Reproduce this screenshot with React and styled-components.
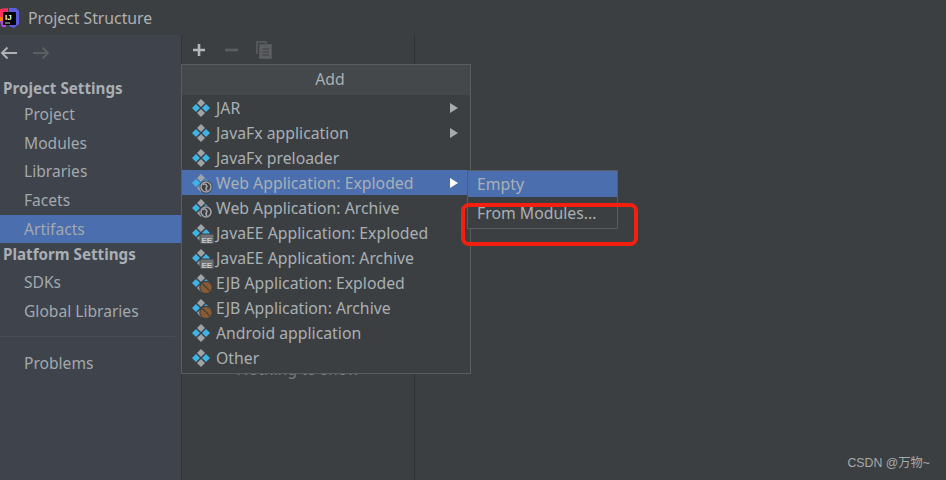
import React from "react";
import styled, { createGlobalStyle } from "styled-components";

const GlobalStyle = createGlobalStyle`
  html, body {
    margin: 0;
    padding: 0;
    background: #3c3f41;
  }
  body {
    font-family: "Noto Sans", "Open Sans", sans-serif;
    color: #a9b0b5;
  }
`;

const Frame = styled.div`
  position: relative;
  width: 946px;
  height: 480px;
  overflow: hidden;
  background: #3c3f41;
  display: flex;
  flex-direction: column;
`;

const TitleBar = styled.div`
  height: 35px;
  flex: none;
  display: flex;
  align-items: center;
  gap: 8px;
  padding-top: 1px;
  box-sizing: border-box;
  font-size: 15.75px;
  color: #afb1b3;
`;

const Body = styled.div`
  flex: 1;
  display: flex;
  min-height: 0;
`;

const Sidebar = styled.div`
  width: 181px;
  flex: none;
  background: #3e434c;
  border-right: 1px solid #323232;
`;

const NavArrows = styled.div`
  height: 35px;
  display: flex;
  align-items: center;
  gap: 14px;
  padding-top: 1px;
  box-sizing: border-box;
`;

const SideHead = styled.div`
  height: ${(p) => p.$height}px;
  line-height: ${(p) => p.$line}px;
  padding-left: 3px;
  font-size: 15.2px;
  font-weight: 700;
  color: #a9afb3;
  margin-top: ${(p) => p.$top || 0}px;
`;

const SideItem = styled.div`
  height: 28.7px;
  line-height: 28.7px;
  padding-left: 24px;
  font-size: 15.6px;
  color: #a3a9ad;
  background: ${(p) => (p.$active ? "#4b6eaf" : "transparent")};
`;

const SideRule = styled.div`
  height: 1px;
  margin: 11px 6px 12px 0;
  background: #4a4c4f;
`;

const Middle = styled.div`
  width: 232px;
  flex: none;
  position: relative;
  border-right: 1px solid #323232;
`;

const Tools = styled.div`
  height: 29px;
  display: flex;
  align-items: center;
  gap: 18px;
  padding-left: 10px;
`;

const Empty = styled.div`
  position: absolute;
  top: 323px;
  left: 0;
  width: 232px;
  text-align: center;
  font-size: 15.8px;
  color: #7a7d7f;
`;

const Popup = styled.div`
  position: absolute;
  left: 181px;
  top: 64px;
  width: 288px;
  height: 308px;
  background: #3c3f41;
  border: 1px solid #5a5d5f;
`;

const PopupTitle = styled.div`
  height: 30px;
  line-height: 29px;
  padding-left: 8px;
  text-align: center;
  font-size: 15.8px;
  background: #45484b;
  color: #a9afb3;
`;

const MenuRow = styled.div`
  height: 25px;
  display: flex;
  align-items: center;
  gap: 6px;
  padding: 0 12px 0 10px;
  font-size: 15.8px;
  color: #a9b0b5;
  background: ${(p) => (p.$active ? "#4b6eaf" : "transparent")};
`;

const RowLabel = styled.span`
  flex: 1;
  white-space: nowrap;
`;

const Caret = styled.span`
  width: 0;
  height: 0;
  border-left: 8px solid ${(p) => (p.$active ? "#ffffff" : "#a9acae")};
  border-top: 5px solid transparent;
  border-bottom: 5px solid transparent;
`;

const SubMenu = styled.div`
  position: absolute;
  left: 467px;
  top: 170px;
  width: 149px;
  height: 57px;
  background: #3c3f41;
  border: 1px solid #5a5d5f;
`;

const SubRow = styled.div`
  height: ${(p) => (p.$active ? 26 : 30)}px;
  line-height: ${(p) => (p.$active ? 26 : 30)}px;
  padding-left: 9px;
  margin-bottom: ${(p) => (p.$active ? 1 : 0)}px;
  font-size: 15.8px;
  color: #a9b0b5;
  background: ${(p) => (p.$active ? "#4b6eaf" : "transparent")};
`;

const RedMark = styled.div`
  position: absolute;
  left: 461px;
  top: 203px;
  width: 169px;
  height: 35px;
  border: 4px solid #f4200f;
  border-radius: 8px;
`;

const Watermark = styled.div`
  position: absolute;
  right: 16px;
  bottom: 9px;
  font-family: "Liberation Sans", "Noto Sans CJK SC", sans-serif;
  font-size: 12.3px;
  color: #a8aaac;
`;

const Logo = () => (
  <svg width="20" height="20" viewBox="0 0 20 20">
    <path d="M0 1 L8 0 L8 14 L0 14 Z" fill="#fe315d" />
    <path d="M9 0 L16 0 L19 3 L19 16 L14 20 L9 18 Z" fill="#5c5ce0" />
    <path d="M0 13 L6 13 L6 19 L2 19 Z" fill="#b345f1" />
    <path d="M0 9 L3 9 L3 13 L0 13 Z" fill="#f97a12" />
    <rect x="3" y="4" width="13" height="13" fill="#000" />
    <text x="5" y="11.5" fontSize="8" fontWeight="700" fill="#fff" fontFamily="Liberation Sans">IJ</text>
    <rect x="5" y="14.5" width="5" height="1" fill="#d8d8d8" />
  </svg>
);

const ArrowLeft = () => (
  <svg width="18" height="14" viewBox="0 0 18 14" fill="none" stroke="#aeb0b2" strokeWidth="2">
    <path d="M17 7 H2 M7.5 1.5 L2 7 L7.5 12.5" />
  </svg>
);

const ArrowRight = () => (
  <svg width="18" height="14" viewBox="0 0 18 14" fill="none" stroke="#5c5f61" strokeWidth="2">
    <path d="M1 7 H16 M10.5 1.5 L16 7 L10.5 12.5" />
  </svg>
);

const Plus = () => (
  <svg width="14" height="14" viewBox="0 0 14 14" stroke="#b4b6b8" strokeWidth="2.6">
    <path d="M7 1 V13 M1 7 H13" />
  </svg>
);

const Minus = () => (
  <svg width="14" height="14" viewBox="0 0 14 14" stroke="#5c5f61" strokeWidth="2.6">
    <path d="M1 7 H14" />
  </svg>
);

const Copy = () => (
  <svg width="16" height="18" viewBox="0 0 16 18" fill="none" stroke="#5c5f61" strokeWidth="1.5">
    <path d="M1 13 V1 H10 V3" />
    <path d="M4 4 H15 V17 H4 Z" fill="#5c5f61" />
    <path d="M6.5 8 H13 M6.5 11 H13 M6.5 14 H13" stroke="#3c3f41" strokeWidth="1" />
  </svg>
);

// module icon: four separate diamonds, with an optional badge at bottom right
const ModuleIcon = ({ badge }) => (
  <svg width="18" height="18" viewBox="0 0 18 18" style={{ flex: "none", overflow: "visible" }}>
    <path d="M9 0 L13 4 L9 8 L5 4 Z" fill="#a0a4a8" />
    <path d="M4 5 L8 9 L4 13 L0 9 Z" fill="#3eb4e6" />
    <path d="M14 5 L18 9 L14 13 L10 9 Z" fill="#3eb4e6" />
    <path d="M9 10 L13 14 L9 18 L5 14 Z" fill="#a0a4a8" />
    {badge === "web" && (
      <g>
        <circle cx="14" cy="13" r="6.5" fill="#3c3f41" />
        <circle cx="14" cy="13" r="5" fill="none" stroke="#a0a4a8" strokeWidth="1.6" />
        <path d="M10.5 10.5 Q14 9 15 12.5 Q13 14.5 15 17" fill="none" stroke="#a0a4a8" strokeWidth="1.6" />
      </g>
    )}
    {badge === "ee" && (
      <g>
        <rect x="7.5" y="9.5" width="15" height="10" fill="#3c3f41" />
        <rect x="8.5" y="10.5" width="13" height="9" fill="#6e7275" />
        <text x="9.5" y="18.5" fontSize="8" fontWeight="700" fill="#c4c7c9" fontFamily="Liberation Sans">EE</text>
      </g>
    )}
    {badge === "ejb" && (
      <g>
        <circle cx="14" cy="13.5" r="6.8" fill="#3c3f41" />
        <circle cx="14" cy="13.5" r="5.6" fill="#8a5a33" />
        <path d="M10.5 10 Q14.5 13 17.5 17" fill="none" stroke="#3c3f41" strokeWidth="1.2" />
      </g>
    )}
  </svg>
);

const menuItems = [
  { label: "JAR", sub: true },
  { label: "JavaFx application", sub: true },
  { label: "JavaFx preloader" },
  { label: "Web Application: Exploded", badge: "web", sub: true, active: true },
  { label: "Web Application: Archive", badge: "web" },
  { label: "JavaEE Application: Exploded", badge: "ee" },
  { label: "JavaEE Application: Archive", badge: "ee" },
  { label: "EJB Application: Exploded", badge: "ejb" },
  { label: "EJB Application: Archive", badge: "ejb" },
  { label: "Android application" },
  { label: "Other" },
];

export default function App() {
  return (
    <Frame>
      <GlobalStyle />
      <TitleBar>
        <Logo />
        Project Structure
      </TitleBar>
      <Body>
        <Sidebar>
          <NavArrows>
            <ArrowLeft />
            <ArrowRight />
          </NavArrows>
          <SideHead $top={4} $height={26} $line={28}>Project Settings</SideHead>
          <SideItem>Project</SideItem>
          <SideItem>Modules</SideItem>
          <SideItem>Libraries</SideItem>
          <SideItem>Facets</SideItem>
          <SideItem $active>Artifacts</SideItem>
          <SideHead $height={24.6} $line={23}>Platform Settings</SideHead>
          <SideItem>SDKs</SideItem>
          <SideItem>Global Libraries</SideItem>
          <SideRule />
          <SideItem>Problems</SideItem>
        </Sidebar>
        <Middle>
          <Tools>
            <Plus />
            <Minus />
            <Copy />
          </Tools>
          <Empty>Nothing to show</Empty>
        </Middle>
      </Body>
      <Popup>
        <PopupTitle>Add</PopupTitle>
        {menuItems.map((item) => (
          <MenuRow key={item.label} $active={item.active}>
            <ModuleIcon badge={item.badge} />
            <RowLabel>{item.label}</RowLabel>
            {item.sub && <Caret $active={item.active} />}
          </MenuRow>
        ))}
      </Popup>
      <SubMenu>
        <SubRow $active>Empty</SubRow>
        <SubRow>From Modules...</SubRow>
      </SubMenu>
      <RedMark />
      <Watermark>CSDN @万物~</Watermark>
    </Frame>
  );
}
